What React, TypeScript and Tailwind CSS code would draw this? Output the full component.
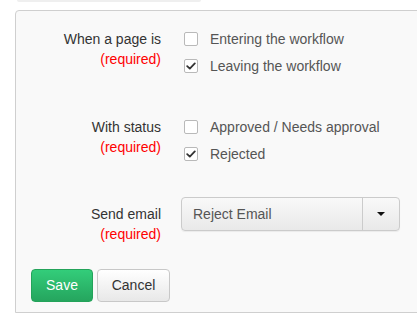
import React from "react";

const font = { fontFamily: '"Liberation Sans", Arial, sans-serif' };

function Checkbox({ checked }: { checked?: boolean }) {
  return (
    <span className="ml-[3px] flex h-[14px] w-[14px] flex-shrink-0 items-center justify-center rounded-[2px] border border-[#b9b9b9] bg-white">
      {checked && (
        <svg width="10" height="8" viewBox="0 0 10 8" fill="none">
          <path d="M1.2 4.2 L3.8 6.6 L8.8 1.4" stroke="#333" strokeWidth="1.8" strokeLinecap="round" strokeLinejoin="round" />
        </svg>
      )}
    </span>
  );
}

function Option({ label, checked, className = "" }: { label: string; checked?: boolean; className?: string }) {
  return (
    <div className={`flex h-[20px] items-center ${className}`}>
      <Checkbox checked={checked} />
      <span className="ml-[12px] text-[14px] leading-[20px] text-[#555]">{label}</span>
    </div>
  );
}

function Label({ text, className = "" }: { text: string; className?: string }) {
  return (
    <div className={`w-[145px] flex-shrink-0 text-right text-[14px] leading-[20px] ${className}`}>
      <div className="text-[#333]">{text}</div>
      <div className="text-[#f00]">(required)</div>
    </div>
  );
}

export default function App() {
  return (
    <div className="h-[323px] w-[417px] overflow-hidden bg-white" style={font}>
      {/* shadow of the card above */}
      <div className="ml-[17px] h-[2px] w-[184px] rounded-b bg-[#efefef]" />

      <div className="ml-[15px] mt-[8px] w-[430px] rounded-tl-[4px] border border-[#cfcfcf] bg-[#f9f9f9] pb-[10px] pt-[18px]">
        {/* When a page is */}
        <div className="flex">
          <Label text="When a page is" />
          <div className="ml-[20px]">
            <Option label="Entering the workflow" />
            <Option label="Leaving the workflow" checked className="mt-[7px]" />
          </div>
        </div>

        {/* With status */}
        <div className="mt-[41px] flex">
          <Label text="With status" />
          <div className="ml-[20px]">
            <Option label="Approved / Needs approval" />
            <Option label="Rejected" checked className="mt-[7px]" />
          </div>
        </div>

        {/* Send email */}
        <div className="mt-[33px] flex">
          <Label text="Send email" className="pt-[7px]" />
          <div className="ml-[20px] flex h-[34px] w-[219px] overflow-hidden rounded-[4px] border border-[#cbcbcb] bg-gradient-to-b from-[#f9f9f9] to-[#e9e9e9] shadow-[0_1px_1px_rgba(0,0,0,0.06)]">
            <div className="flex flex-1 items-center pl-[11px] text-[14px] text-[#555]">Reject Email</div>
            <div className="flex w-[37px] items-center justify-center border-l border-[#cbcbcb]">
              <span className="h-0 w-0 border-l-[4px] border-r-[4px] border-t-[4px] border-l-transparent border-r-transparent border-t-[#111]" />
            </div>
          </div>
        </div>

        {/* buttons */}
        <div className="ml-[15px] mt-[25px] flex gap-[4px]">
          <button className="h-[33px] w-[62px] rounded-[4px] border border-[#24a35a] bg-gradient-to-b from-[#33cd7a] to-[#25a55e] text-[14px] text-white">
            Save
          </button>
          <button className="h-[33px] w-[73px] rounded-[4px] border border-[#c8c8c8] bg-gradient-to-b from-white to-[#e8e8e8] text-[14px] text-[#333]">
            Cancel
          </button>
        </div>
      </div>
    </div>
  );
}
